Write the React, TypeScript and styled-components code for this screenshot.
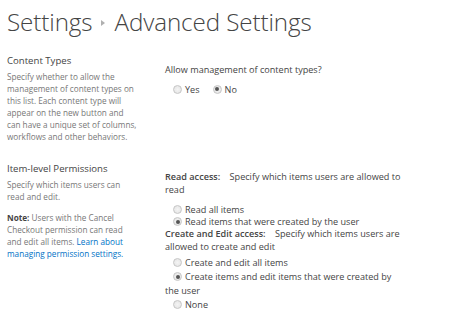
import React from "react";
import styled, { createGlobalStyle } from "styled-components";

const Global = createGlobalStyle`
  html, body { margin: 0; padding: 0; background: #ffffff; }
  body { font-family: "Open Sans", "Noto Sans", "Liberation Sans", sans-serif; color: #444444; }
`;

const Page = styled.div`
  width: 474px;
  height: 322px;
  overflow: hidden;
  padding: 0 0 0 7px;
  box-sizing: border-box;
`;

const Title = styled.h1`
  display: flex;
  align-items: center;
  gap: 9px;
  margin: 0;
  padding-top: 1px;
  height: 41px;
  font-weight: 300;
  font-size: 24.2px;
  color: #444444;
  letter-spacing: -0.1px;
`;

const Chevron = styled.span`
  width: 0;
  height: 0;
  border-top: 3px solid transparent;
  border-bottom: 3px solid transparent;
  border-left: 4px solid #b0b0b0;
  margin-top: 3px;
`;

const Section = styled.div<{ $top: number }>`
  display: grid;
  grid-template-columns: 158px 1fr;
  margin-top: ${(p) => p.$top}px;
`;

const Side = styled.div``;

const SideHeading = styled.div`
  font-size: 9.6px;
  line-height: 13px;
  color: #444444;
  margin-bottom: 4px;
`;

const SideText = styled.p<{ $gap?: number }>`
  margin: 0 0 ${(p) => p.$gap ?? 0}px 0;
  font-size: 8.2px;
  line-height: 12px;
  color: #777777;
`;

const Strong = styled.b`
  font-weight: 700;
  color: #444444;
`;

const Link = styled.span`
  color: #0072c6;
`;

const Main = styled.div<{ $pad: number }>`
  padding-top: ${(p) => p.$pad}px;
  font-size: 9.1px;
  line-height: 12.5px;
  color: #444444;
`;

const Label = styled.div<{ $mb?: number }>`
  margin-bottom: ${(p) => p.$mb ?? 0}px;
`;

const Bold = styled.span`
  font-weight: 600;
  margin-right: 7px;
`;

const InlineOptions = styled.div`
  display: flex;
  gap: 13px;
  padding-left: 8px;
`;

const OptionList = styled.div<{ $lh: number }>`
  padding-left: 8px;
  line-height: ${(p) => p.$lh}px;
`;

const Option = styled.div``;

const Radio = styled.span<{ $on?: boolean }>`
  display: inline-block;
  box-sizing: border-box;
  width: 9px;
  height: 9px;
  border-radius: 50%;
  border: 1px solid #c6c6c6;
  background: radial-gradient(circle, #f4f4f4 0%, #e2e2e2 100%);
  vertical-align: -1px;
  margin-right: 3px;
  position: relative;
  &::after {
    content: "";
    display: ${(p) => (p.$on ? "block" : "none")};
    position: absolute;
    left: 50%;
    top: 50%;
    width: 4px;
    height: 4px;
    margin: -2px 0 0 -2px;
    border-radius: 50%;
    background: #555555;
  }
`;

const Wrap = styled.span`
  margin-left: -8px;
`;

export default function App() {
  return (
    <>
      <Global />
      <Page>
        <Title>
          Settings
          <Chevron />
          Advanced Settings
        </Title>
        <Section $top={12}>
          <Side>
            <SideHeading>Content Types</SideHeading>
            <SideText>
              Specify whether to allow the
              <br />
              management of content types on
              <br />
              this list. Each content type will
              <br />
              appear on the new button and
              <br />
              can have a unique set of columns,
              <br />
              workflows and other behaviors.
            </SideText>
          </Side>
          <Main $pad={10}>
            <Label $mb={7}>Allow management of content types?</Label>
            <InlineOptions>
              <Option>
                <Radio />
                Yes
              </Option>
              <Option>
                <Radio $on />
                No
              </Option>
            </InlineOptions>
          </Main>
        </Section>
        <Section $top={19}>
          <Side>
            <SideHeading>Item-level Permissions</SideHeading>
            <SideText $gap={9}>
              Specify which items users can
              <br />
              read and edit.
            </SideText>
            <SideText>
              <Strong>Note:</Strong> Users with the Cancel
              <br />
              Checkout permission can read
              <br />
              and edit all items. <Link>Learn about</Link>
              <br />
              <Link>managing permission settings.</Link>
            </SideText>
          </Side>
          <Main $pad={9}>
            <Label $mb={8}>
              <Bold>Read access:</Bold> Specify which items users are allowed to
              <br />
              read
            </Label>
            <OptionList $lh={12}>
              <Option>
                <Radio />
                Read all items
              </Option>
              <Option>
                <Radio $on />
                Read items that were created by the user
              </Option>
            </OptionList>
            <Label $mb={3}>
              <Bold>Create and Edit access:</Bold> Specify which items users are
              <br />
              allowed to create and edit
            </Label>
            <OptionList $lh={14}>
              <Option>
                <Radio />
                Create and edit all items
              </Option>
              <Option>
                <Radio $on />
                Create items and edit items that were created by
                <br />
                <Wrap>the user</Wrap>
              </Option>
              <Option>
                <Radio />
                None
              </Option>
            </OptionList>
          </Main>
        </Section>
      </Page>
    </>
  );
}
